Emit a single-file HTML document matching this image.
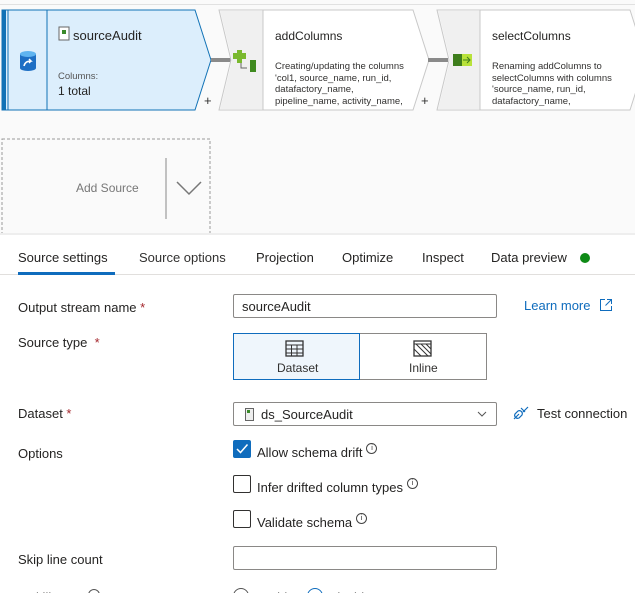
<!DOCTYPE html><html><head><style>
html,body{margin:0;width:635px;height:593px;overflow:hidden}
body{background:#fff;font-family:"Liberation Sans",sans-serif;color:#323130;position:relative}
.a{position:absolute;white-space:nowrap}
.t{font-size:12px;font-weight:bold;color:#252423}
.d{font-size:9.5px;line-height:11.5px;color:#323130}
.lbl{font-size:13px;color:#252423}
.inp{position:absolute;border:1px solid #8a8886;border-radius:2px;background:#fff;box-sizing:border-box}
.cb{position:absolute;width:18px;height:18px;border:1px solid #323130;border-radius:2px;box-sizing:border-box;background:#fff}
.info{display:inline-block;width:9px;height:9px;border:1px solid #444;border-radius:50%;font-size:7px;line-height:9px;text-align:center;vertical-align:top;margin-left:4px;margin-top:-2px}
</style></head><body>
<div class="a" style="left:0;top:0;width:635px;height:233px;background:#fafafa"></div>
<div class="a" style="left:0;top:4px;width:635px;height:1px;background:#e1e1e1"></div>
<svg class="a" style="left:0;top:0" width="635" height="233">
<polygon points="2,10 195,10 211,60 195,110 2,110" fill="#dceefc" stroke="#1172b6" stroke-width="1"/>
<rect x="2" y="10" width="4" height="100" fill="#1172b6"/>
<line x1="8" y1="10" x2="8" y2="110" stroke="#1172b6"/>
<line x1="47" y1="10" x2="47" y2="110" stroke="#1172b6"/>
<rect x="211" y="58" width="21" height="4" fill="#8a8a8a"/>
<polygon points="219,10 413,10 429,60 413,110 219,110 231,60" fill="#fff" stroke="#c8c8c8"/>
<polygon points="220,11 263,11 263,109 220,109 232,60" fill="#f0f0f0"/>
<line x1="263" y1="10" x2="263" y2="110" stroke="#c8c8c8"/>
<rect x="428" y="58" width="20" height="4" fill="#8a8a8a"/>
<polygon points="437,10 630,10 646,60 630,110 437,110 449,60" fill="#fff" stroke="#c8c8c8"/>
<polygon points="438,11 480,11 480,109 438,109 450,60" fill="#f0f0f0"/>
<line x1="480" y1="10" x2="480" y2="110" stroke="#c8c8c8"/>
<path d="M20,54 v14 a8,3 0 0 0 16,0 v-14 z" fill="#1e6fc4"/>
<ellipse cx="28" cy="54" rx="8" ry="3" fill="#5fb4f0"/>
<path d="M24,66 q1,-5 7,-5 l-2,-2 M31,61 l-2,2" stroke="#fff" stroke-width="1.5" fill="none"/>
<rect x="237" y="50" width="5" height="13" fill="#7ab92e"/><rect x="233" y="53" width="13" height="6" fill="#7ab92e"/>
<path d="M241,63 v5 h6" stroke="#666" fill="none"/><rect x="250" y="60" width="6" height="12" fill="#3f8a1f"/>
<rect x="453" y="54" width="9" height="12" fill="#3e7d1c"/><rect x="462" y="54" width="10" height="12" fill="#b8e23a"/>
<path d="M463,60 h7 M467,57 l3,3 -3,3" stroke="#3e7d1c" fill="none"/>
<rect x="59" y="27" width="10" height="13" fill="#fff" stroke="#666"/><rect x="62" y="30" width="4" height="4" fill="#3a8a2a"/>
<rect x="2" y="139" width="208" height="100" fill="none" stroke="#999" stroke-dasharray="3,2"/>
<line x1="166" y1="158" x2="166" y2="219" stroke="#888"/>
<path d="M177,182 l12,12 12,-12" stroke="#777" stroke-width="1.5" fill="none"/>
</svg>
<div class="a" style="left:73px;top:28px;font-size:13px;color:#252423">sourceAudit</div>
<div class="a" style="left:58px;top:71px;font-size:9.5px;color:#555">Columns:</div>
<div class="a" style="left:58px;top:84px;font-size:12px;color:#252423">1 total</div>
<div class="a" style="left:204px;top:93px;font-size:13px">+</div>
<div class="a" style="left:421px;top:93px;font-size:13px">+</div>
<div class="a" style="left:275px;top:29px;font-size:12px;color:#252423">addColumns</div>
<div class="a d" style="left:275px;top:61px">Creating/updating the columns<br>'col1, source_name, run_id,<br>datafactory_name,<br>pipeline_name, activity_name,</div>
<div class="a" style="left:492px;top:29px;font-size:12px;color:#252423">selectColumns</div>
<div class="a d" style="left:492px;top:61px;height:45px;overflow:hidden">Renaming addColumns to<br>selectColumns with columns<br>'source_name, run_id,<br>datafactory_name,<br>pipeline_name, activity</div>
<div class="a" style="left:76px;top:181px;font-size:12px;color:#777">Add Source</div>

<div class="a" style="left:0;top:233px;width:635px;height:2px;background:#eee"></div>
<div class="a" style="left:0;top:274px;width:635px;height:1px;background:#e1dfdd"></div>
<div class="a" style="left:18px;top:272px;width:97px;height:3px;background:#0f6cbd"></div>
<div class="a lbl" style="left:18px;top:250px">Source settings</div>
<div class="a lbl" style="left:139px;top:250px;color:#323130">Source options</div>
<div class="a lbl" style="left:256px;top:250px">Projection</div>
<div class="a lbl" style="left:342px;top:250px">Optimize</div>
<div class="a lbl" style="left:422px;top:250px">Inspect</div>
<div class="a lbl" style="left:491px;top:250px">Data preview</div>
<div class="a" style="left:580px;top:253px;width:10px;height:10px;border-radius:50%;background:#0e8a16"></div>

<div class="a lbl" style="left:18px;top:300px">Output stream name <span style="color:#a4262c">*</span></div>
<div class="inp" style="left:233px;top:294px;width:264px;height:24px"><span class="a lbl" style="left:8px;top:4px">sourceAudit</span></div>
<div class="a lbl" style="left:524px;top:298px;color:#0f6cbd">Learn more</div>
<svg class="a" style="left:599px;top:298px" width="14" height="14"><path d="M6,1.5H1.5v11h11V8 M8,1.5h4.5V6 M12.5,1.5L6.5,7.5" stroke="#0f6cbd" fill="none"/></svg>
<div class="a lbl" style="left:18px;top:335px">Source type <span style="color:#a4262c">&nbsp;*</span></div>
<div class="a" style="left:233px;top:333px;width:127px;height:47px;background:#eff6fc;border:1px solid #0f6cbd;box-sizing:border-box"></div>
<div class="a" style="left:360px;top:333px;width:127px;height:47px;border:1px solid #8a8886;border-left:none;box-sizing:border-box"></div>
<svg class="a" style="left:285px;top:340px" width="20" height="18"><rect x="1" y="1" width="17" height="15" fill="none" stroke="#333" stroke-width="1.3"/><path d="M1,5h17M1,9h17M1,13h17M6.5,5v11M12,5v11" stroke="#333"/></svg>
<svg class="a" style="left:413px;top:340px" width="20" height="18"><rect x="1" y="1" width="17" height="15" fill="none" stroke="#333" stroke-width="1.3"/><path d="M1,4h17M3,4l12,12M8,4l10,10M13,4l5,5M1,9l7,7" stroke="#333"/></svg>
<div class="a" style="left:277px;top:361px;font-size:12px">Dataset</div>
<div class="a" style="left:409px;top:361px;font-size:12px">Inline</div>

<div class="a lbl" style="left:18px;top:406px">Dataset <span style="color:#a4262c">*</span></div>
<div class="inp" style="left:233px;top:402px;width:264px;height:24px"><span class="a" style="left:11px;top:5px;width:7px;height:11px;border:1px solid #666;background:#eee"></span><span class="a" style="left:13px;top:7px;width:3px;height:3px;background:#3a8a2a"></span><span class="a lbl" style="left:27px;top:4px">ds_SourceAudit</span><svg class="a" style="left:243px;top:8px" width="10" height="6"><path d="M1,1l4,4 4,-4" stroke="#555" fill="none"/></svg></div>
<svg class="a" style="left:512px;top:405px" width="18" height="16"><path d="M2,14l5,-5 M16,2l-5,5 M6,6a3,3 0 0 1 4,4l-3,3a3,3 0 0 1 -4,-4z M9,3l4,4" stroke="#0f6cbd" fill="none" stroke-width="1.2"/></svg>
<div class="a lbl" style="left:537px;top:406px">Test connection</div>

<div class="a lbl" style="left:18px;top:446px">Options</div>
<div class="cb" style="left:233px;top:440px;background:#0f6cbd;border-color:#0f6cbd"><svg width="18" height="18" style="position:absolute;left:-1px;top:-1px"><path d="M4,9l3.5,3.5 7,-8" stroke="#fff" stroke-width="1.5" fill="none"/></svg></div>
<div class="a lbl" style="left:257px;top:445px">Allow schema drift<span class="info">i</span></div>
<div class="cb" style="left:233px;top:475px"></div>
<div class="a lbl" style="left:257px;top:480px">Infer drifted column types<span class="info">i</span></div>
<div class="cb" style="left:233px;top:510px"></div>
<div class="a lbl" style="left:257px;top:515px">Validate schema<span class="info">i</span></div>
<div class="a lbl" style="left:18px;top:552px">Skip line count</div>
<div class="inp" style="left:233px;top:546px;width:264px;height:24px"></div>
<div class="a lbl" style="left:18px;top:590px">Multiline rows</div>
<div class="a" style="left:233px;top:588px;width:14px;height:14px;border:1px solid #555;border-radius:50%"></div>
<div class="a lbl" style="left:254px;top:590px">Enable</div>
<div class="a" style="left:307px;top:588px;width:14px;height:14px;border:1px solid #0f6cbd;border-radius:50%"></div>
<div class="a lbl" style="left:328px;top:590px">Disable</div>
<div class="a" style="left:88px;top:589px;width:10px;height:10px;border:1px solid #555;border-radius:50%"></div>
</body></html>
